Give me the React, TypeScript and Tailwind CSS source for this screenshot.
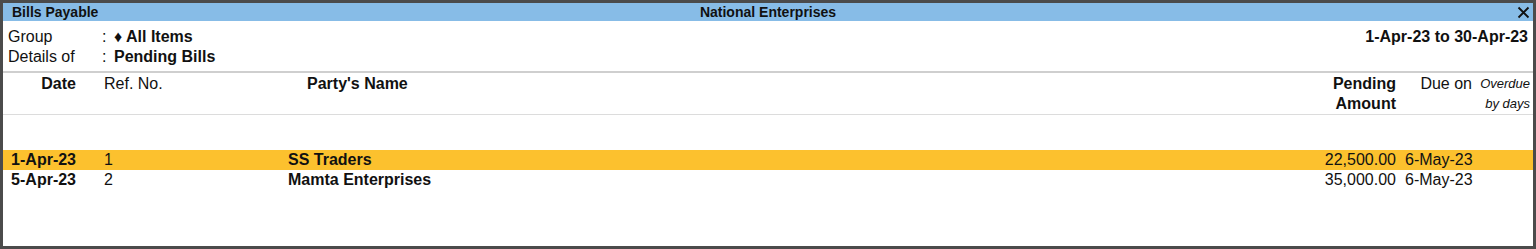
import React from "react";

const font = { fontFamily: '"Liberation Sans", Arial, sans-serif' };

export default function App() {
  return (
    <div
      className="w-full h-[249px] bg-[#4b4b4b] pt-[3px] px-[3px] pb-[3px] text-[#111]"
      style={font}
    >
      <div className="h-full bg-white flex flex-col">
        {/* title bar */}
        <div className="relative h-[18px] bg-[#87bce7] flex items-center text-[14px] font-bold leading-none">
          <span className="pl-[9px]">Bills Payable</span>
          <span className="absolute left-1/2 -translate-x-1/2">National Enterprises</span>
          <span className="ml-auto pr-[3px] flex items-center">
            <svg width="13" height="13" viewBox="0 0 13 13">
              <path d="M1.5 1.5 L11.5 11.5 M11.5 1.5 L1.5 11.5" stroke="#111" strokeWidth="1.8" />
            </svg>
          </span>
        </div>

        {/* info */}
        <div className="flex pt-[6px] text-[16px] leading-[20px]">
          <div className="flex flex-col pl-[5px]">
            <div className="flex">
              <span className="w-[94px]">Group</span>
              <span className="w-[12px]">:</span>
              <span className="font-bold">♦ All Items</span>
            </div>
            <div className="flex">
              <span className="w-[94px]">Details of</span>
              <span className="w-[12px]">:</span>
              <span className="font-bold">Pending Bills</span>
            </div>
          </div>
          <div className="ml-auto pr-[5px] font-bold">1-Apr-23 to 30-Apr-23</div>
        </div>

        <div className="mt-[4px] h-[2px] bg-[#cfcfcf]" />

        {/* column headers */}
        <div className="flex text-[16px] leading-[20px] h-[41px] pt-[1px]">
          <div className="w-[73px] text-right font-bold">Date</div>
          <div className="w-[28px]" />
          <div className="w-[184px]">Ref. No.</div>
          <div className="flex-1 pl-[19px] font-bold">Party's Name</div>
          <div className="w-[100px] text-right font-bold">
            Pending
            <br />
            Amount
          </div>
          <div className="w-[76px] text-right whitespace-nowrap">Due on</div>
          <div className="w-[58px] text-right italic text-[13px] leading-[20px]">
            Overdue
            <br />
            by days
          </div>
          <div className="w-[3px]" />
        </div>

        <div className="h-[1px] bg-[#dcdcdc]" />

        <div className="h-[35px]" />

        {[
          { d: "1-Apr-23", r: "1", p: "SS Traders", a: "22,500.00", due: "6-May-23", hl: true },
          { d: "5-Apr-23", r: "2", p: "Mamta Enterprises", a: "35,000.00", due: "6-May-23", hl: false },
        ].map((row) => (
          <div
            key={row.r}
            className={
              "flex text-[16px] leading-[20px] h-[20px] whitespace-nowrap " +
              (row.hl ? "bg-[#fcc12e]" : "")
            }
          >
            <div className="w-[73px] text-right font-bold">{row.d}</div>
            <div className="w-[28px]" />
            <div className="w-[184px]">{row.r}</div>
            <div className="flex-1 font-bold">{row.p}</div>
            <div className="w-[100px] text-right">{row.a}</div>
            <div className="w-[134px] pl-[9px]">{row.due}</div>
            <div className="w-[3px]" />
          </div>
        ))}
      </div>
    </div>
  );
}
